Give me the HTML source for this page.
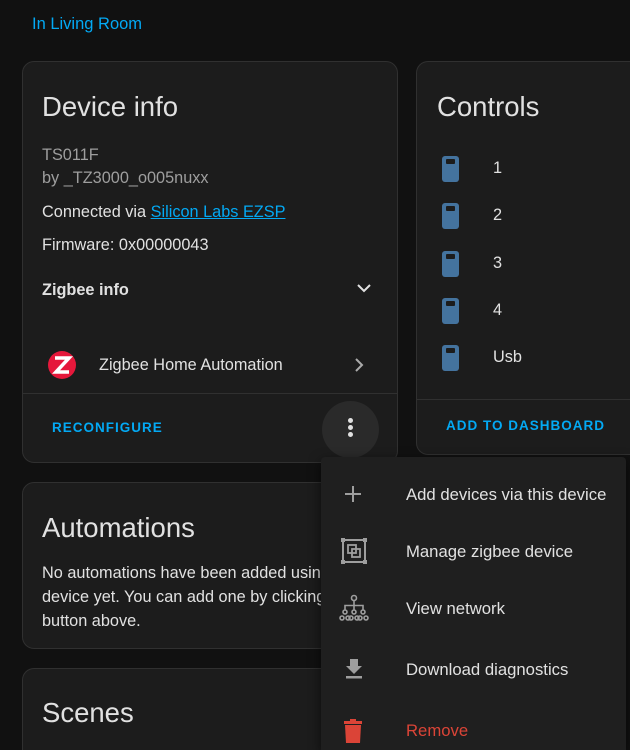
<!DOCTYPE html><html><head><style>
html,body{margin:0;width:630px;height:750px;overflow:hidden}
body{background:#111;font-family:"Liberation Sans",sans-serif;color:#e1e1e1;position:relative}
.a{position:absolute}
.card{position:absolute;background:#1c1c1c;border:1px solid #303030;border-radius:12px;box-sizing:border-box}
.h{font-size:27.5px;color:#e1e1e1}
.t{font-size:16.3px}
.btn{color:#03a9f4;font-size:13.5px;font-weight:bold;letter-spacing:1px}
.sw{position:absolute;width:17px;height:26px;background:#44739e;border-radius:3px}
.sw:after{content:"";position:absolute;left:4px;top:3px;width:9px;height:5px;background:#1c1c1c;border-radius:1px}
.mi{position:absolute;left:406px;font-size:16.7px;color:#e1e1e1}
</style></head><body>
<div class="a" style="left:32px;top:15px;color:#03a9f4;font-size:16.5px">In Living Room</div>

<div class="card" style="left:22px;top:61px;width:376px;height:402px">
 <div class="a h" style="left:19px;top:29px">Device info</div>
 <div class="a t" style="left:19px;top:84px;color:#9e9e9e">TS011F</div>
 <div class="a t" style="left:19px;top:107px;color:#9e9e9e">by _TZ3000_o005nuxx</div>
 <div class="a t" style="left:19px;top:141px">Connected via <span style="color:#03a9f4;text-decoration:underline">Silicon Labs EZSP</span></div>
 <div class="a t" style="left:19px;top:174px">Firmware: 0x00000043</div>
 <div class="a t" style="left:19px;top:219px;font-weight:bold">Zigbee info</div>
 <svg class="a" style="left:333px;top:220px" width="16" height="12" viewBox="0 0 16 12"><path d="M2 3l6 6 6-6" stroke="#e1e1e1" stroke-width="2" fill="none"/></svg>
 <svg class="a" style="left:24px;top:288px" width="30" height="30" viewBox="0 0 30 30"><circle cx="15" cy="15" r="14" fill="#e5183b"/><path d="M8 8h14L9 22h13" stroke="#fff" stroke-width="3.5" fill="none"/></svg>
 <div class="a t" style="left:76px;top:294px">Zigbee Home Automation</div>
 <svg class="a" style="left:330px;top:295px" width="12" height="16" viewBox="0 0 12 16"><path d="M3 2l6 6-6 6" stroke="#aaa" stroke-width="2" fill="none"/></svg>
 <div class="a" style="left:0;top:331px;width:100%;border-top:1px solid #303030"></div>
 <div class="a btn" style="left:29px;top:358px">RECONFIGURE</div>
 <div class="a" style="left:299px;top:339px;width:57px;height:57px;border-radius:50%;background:#2a2a2a"></div>
 <div class="a" style="left:325px;top:356px;width:5px;height:5px;border-radius:50%;background:#e1e1e1;box-shadow:0 7px 0 #e1e1e1,0 14px 0 #e1e1e1"></div>
</div>

<div class="card" style="left:416px;top:61px;width:214px;height:394px;border-right:none;border-radius:12px 0 0 12px">
 <div class="a h" style="left:20px;top:29px">Controls</div>
 <div class="sw" style="left:25px;top:94px"></div><div class="a t" style="left:76px;top:97px">1</div>
 <div class="sw" style="left:25px;top:141px"></div><div class="a t" style="left:76px;top:144px">2</div>
 <div class="sw" style="left:25px;top:189px"></div><div class="a t" style="left:76px;top:192px">3</div>
 <div class="sw" style="left:25px;top:236px"></div><div class="a t" style="left:76px;top:239px">4</div>
 <div class="sw" style="left:25px;top:283px"></div><div class="a t" style="left:76px;top:286px">Usb</div>
 <div class="a" style="left:0;top:337px;width:100%;border-top:1px solid #303030"></div>
 <div class="a btn" style="left:29px;top:356px">ADD TO DASHBOARD</div>
</div>

<div class="card" style="left:22px;top:482px;width:340px;height:167px;overflow:hidden">
 <div class="a h" style="left:19px;top:29px">Automations</div>
 <div class="a t" style="left:19px;top:78px;line-height:24px;width:400px">No automations have been added using this<br>device yet. You can add one by clicking the<br>button above.</div>
</div>
<div class="card" style="left:22px;top:668px;width:340px;height:82px;border-bottom:none;border-radius:12px 12px 0 0">
 <div class="a h" style="left:19px;top:28px">Scenes</div>
</div>

<div class="a" style="left:321px;top:457px;width:305px;height:293px;background:#1f1f1f;border-radius:4px 4px 0 0;box-shadow:0 4px 12px rgba(0,0,0,.6)"></div>
<svg class="a" style="left:344px;top:485px" width="18" height="18" viewBox="0 0 18 18"><path d="M9 1v16M1 9h16" stroke="#9e9e9e" stroke-width="2"/></svg>
<div class="mi" style="top:485px">Add devices via this device</div>
<svg class="a" style="left:340px;top:537px" width="28" height="28" viewBox="0 0 28 28"><rect x="3" y="3" width="22" height="22" fill="none" stroke="#9e9e9e" stroke-width="2"/><rect x="1" y="1" width="4" height="4" fill="#9e9e9e"/><rect x="23" y="1" width="4" height="4" fill="#9e9e9e"/><rect x="1" y="23" width="4" height="4" fill="#9e9e9e"/><rect x="23" y="23" width="4" height="4" fill="#9e9e9e"/><rect x="8" y="8" width="8" height="8" fill="none" stroke="#9e9e9e" stroke-width="1.8"/><rect x="12" y="12" width="8" height="8" fill="none" stroke="#9e9e9e" stroke-width="1.8"/></svg>
<div class="mi" style="top:542px">Manage zigbee device</div>
<svg class="a" style="left:339px;top:594px" width="30" height="28" viewBox="0 0 30 28"><g fill="none" stroke="#9e9e9e" stroke-width="1.6"><circle cx="15" cy="4" r="2.5"/><path d="M15 6.5v5M6 16v-4.5h18V16M15 11.5V16"/><circle cx="6" cy="18" r="2"/><circle cx="15" cy="18" r="2"/><circle cx="24" cy="18" r="2"/><circle cx="3" cy="24" r="2"/><circle cx="9" cy="24" r="2"/><circle cx="12" cy="24" r="2"/><circle cx="18" cy="24" r="2"/><circle cx="21" cy="24" r="2"/><circle cx="27" cy="24" r="2"/></g></svg>
<div class="mi" style="top:599px">View network</div>
<svg class="a" style="left:344px;top:659px" width="20" height="20" viewBox="0 0 20 20"><path d="M6 0h8v7h4l-8 8-8-8h4z" fill="#9e9e9e"/><rect x="2" y="17" width="16" height="2.5" fill="#9e9e9e"/></svg>
<div class="mi" style="top:660px">Download diagnostics</div>
<svg class="a" style="left:344px;top:719px" width="18" height="24" viewBox="0 0 18 24"><rect x="0" y="2" width="18" height="3" fill="#db4437"/><rect x="6" y="0" width="6" height="3" fill="#db4437"/><path d="M1 6h16l-1 18H2z" fill="#db4437"/></svg>
<div class="mi" style="top:721px;color:#db4437">Remove</div>
</body></html>
